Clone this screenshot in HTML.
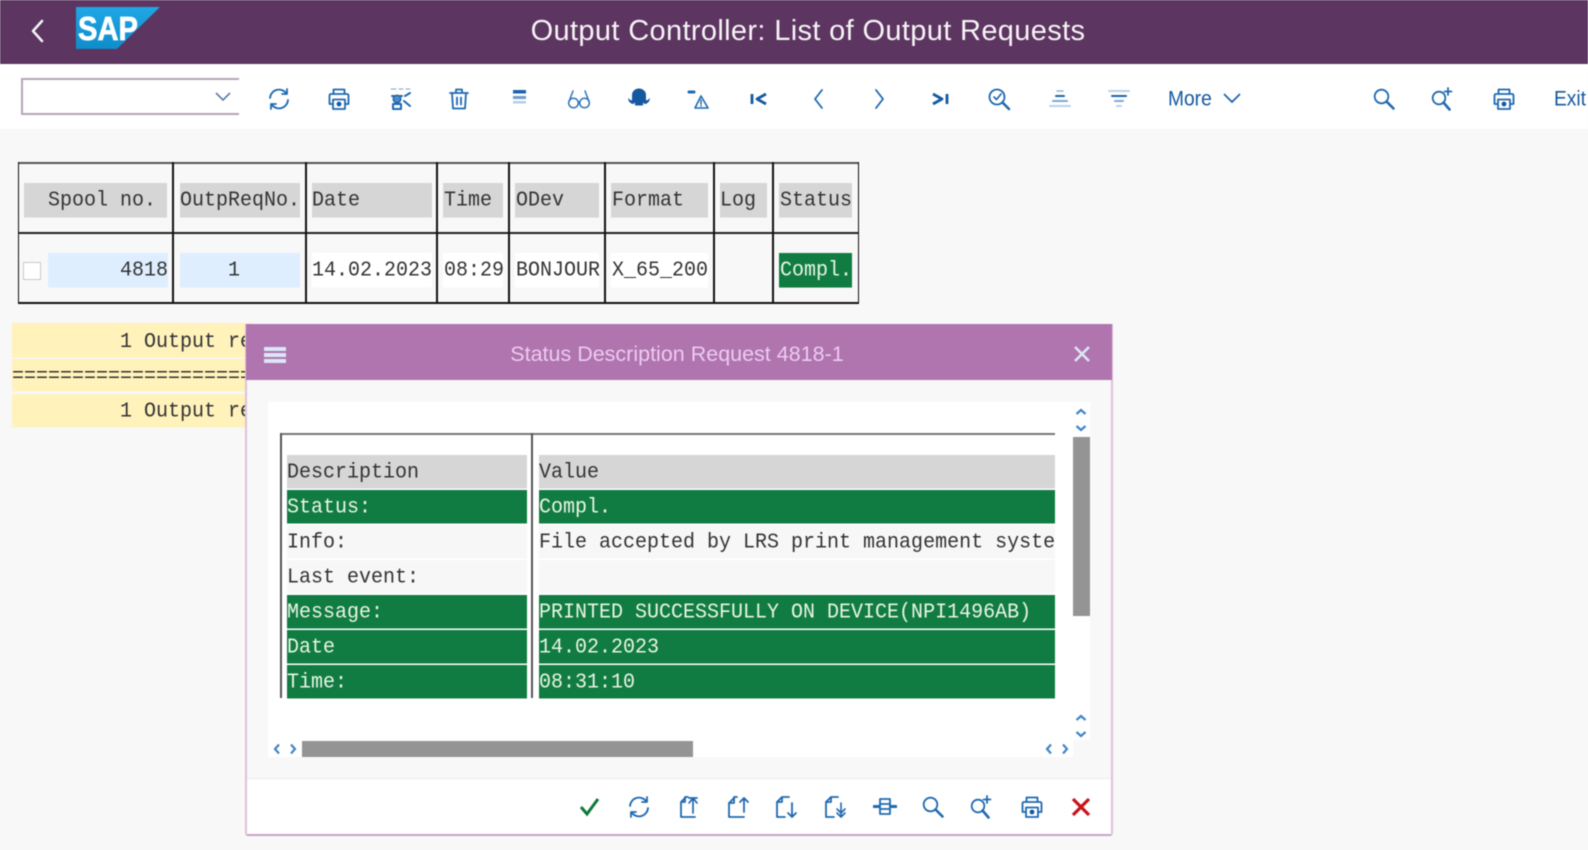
<!DOCTYPE html>
<html lang="en">
<head>
<meta charset="utf-8">
<title>Output Controller: List of Output Requests</title>
<style>
html,body{margin:0;padding:0;width:1588px;height:850px;overflow:hidden;background:#f8f8f8}
#p{position:relative;width:1588px;height:850px;overflow:hidden;background:#f8f8f8;filter:blur(.55px);font-family:"Liberation Sans",Arial,sans-serif}
#p div,#p svg{position:absolute}
.t{font:20px/34px "Liberation Mono",monospace;color:#333;white-space:pre;height:31.5px;transform:scaleY(1.08);transform-origin:0 0}
.r{height:30.6px;line-height:33px}
.n{text-indent:1px}
.g{background:#d6d6d6}.w{background:#fff}.l{background:#deeeff}.e{background:#117c41}.e.t{color:#e8f5e6}
.y{background:#fff2bb}
.v{background:#111}
.i{width:24px;height:24px;fill:none;stroke:#1f69b0;stroke-width:1.8;stroke-linecap:round;stroke-linejoin:round}
.i.f{stroke:none;fill:#14599f}
</style>
</head>
<body>
<div id="p">
<!-- header -->
<div style="left:0;top:0;width:1588px;height:64px;background:#5c3560"></div>
<svg style="left:28px;top:18px" width="20" height="26" fill="none" stroke="#f2f2f6" stroke-width="2.6" stroke-linecap="round" stroke-linejoin="round"><path d="M14 3 5 13l9 10"/></svg>
<svg style="left:76px;top:7px" width="84" height="42"><defs><linearGradient id="sg" x1="0" y1="0" x2="0" y2="1"><stop offset="0" stop-color="#1fa8e4"/><stop offset="1" stop-color="#0f8ccb"/></linearGradient></defs><polygon points="0,0 84,0 41,42 0,42" fill="url(#sg)"/><text x="2" y="33" font-family="Liberation Sans" font-weight="700" font-size="33" fill="#fff" stroke="#fff" stroke-width=".7" textLength="60" lengthAdjust="spacingAndGlyphs">SAP</text></svg>
<div style="left:0;top:13px;width:1616px;text-align:center;color:#f6f3f6;font-size:29px;letter-spacing:.35px;line-height:36px;white-space:pre">Output Controller: List of Output Requests</div>
<!-- toolbar -->
<div style="left:0;top:64px;width:1588px;height:65px;background:#fff"></div>
<div style="left:21px;top:78px;width:216px;height:33px;background:#fff;border:solid #b5a6b7;border-width:2px 0 2px 2px"></div>
<svg style="left:214px;top:91px" width="18" height="12" fill="none" stroke="#5b7fa8" stroke-width="1.6"><path d="M2 2l7 7 7-7"/></svg>

<svg width="0" height="0" style="left:0;top:0">
<defs>
<symbol id="ref" viewBox="0 0 24 24"><path d="M3 11a9 9 0 0 1 16-5M21 13a9 9 0 0 1-16 5" fill="none"/><path d="M20 2v5h-5M4 22v-5h5" fill="none"/></symbol>
<symbol id="prt" viewBox="0 0 24 24"><path d="M6.500 7V2.500h11V7M6 17H2.500V8.500A1.500 1.500 0 0 1 4 7h16a1.500 1.500 0 0 1 1.500 1.500V17H18M6 12.500h12v9.500H6z" fill="none"/><circle cx="12" cy="17" r="1.500" fill="#14599f" stroke="#14599f"/></symbol>
<symbol id="sch" viewBox="0 0 24 24"><circle cx="9.500" cy="9.500" r="6.800" fill="none"/><path d="M14.500 14.500l7 7" fill="none" stroke-width="2.600"/></symbol>
<symbol id="schp" viewBox="0 0 24 24"><circle cx="9" cy="11" r="6.300" fill="none"/><path d="M13.500 15.500l6 7" fill="none" stroke-width="2.600"/><path d="M18 1v7M14.500 4.500h7" fill="none"/></symbol>
</defs>
</svg>

<svg class="i" style="left:267px;top:87px"><use href="#ref"/></svg>
<svg class="i" style="left:327px;top:87px"><use href="#prt"/></svg>
<svg class="i" style="left:388px;top:87px" viewBox="0 0 24 24"><path d="M3 2h5M11 2h4M18 2h4" stroke-width="1" opacity=".6"/><path d="M4 9h10M17 9l5-3M16 14l6 5" stroke-width="2"/><circle cx="9" cy="12" r="3.800" fill="#4f8bc6" stroke-width="1.500"/><path d="M5 17h8v5H5z" stroke-width="2"/></svg>
<svg class="i" style="left:447px;top:87px" viewBox="0 0 24 24"><path d="M3 6h18M9 5.500V2.500h6v3M5 6l1 15.500h12L19 6M10 10.500v7M14 10.500v7"/></svg>
<svg style="left:507px;top:88px" width="24" height="20"><rect x="6" y="2" width="13" height="3.500" fill="#1a64ab"/><rect x="6" y="8" width="13" height="3" fill="#6f9cc9"/><rect x="6" y="13" width="13" height="2.500" fill="#b4cde6"/></svg>
<svg class="i" style="left:567px;top:87px;stroke-width:1.500;stroke:#2f76ba" viewBox="0 0 24 24"><circle cx="6.500" cy="16" r="4.800"/><circle cx="17.500" cy="16" r="4.800"/><path d="M11.300 15.500q.7-1.200 1.400 0M1.800 15 6 4M22.200 15 18 4"/></svg>
<svg class="i f" style="left:627px;top:86px" viewBox="0 0 24 24"><path d="M5 15V9a7 6.500 0 0 1 14 0v6z"/><path d="M1 12c2 2 3 2.500 5 2.500h12c2 0 3-.5 5-2.500-.3 4-3 6-5.500 6l-1.500-1.500H8L6.500 18C4 18 1.300 16 1 12z"/><rect x="8" y="16" width="8" height="3.500"/></svg>
<svg class="i" style="left:686px;top:87px;stroke-width:1.600" viewBox="0 0 24 24"><path d="M3 5h5" stroke-width="3"/><path d="M15 9l7 12H9z"/><path d="M15 13v4M15 18.600v.4" stroke-width="1.500"/></svg>
<svg class="i" style="left:747px;top:87px;stroke-width:2.800;stroke-linecap:butt;stroke:#14599f" viewBox="0 0 24 24"><path d="M5 7v10M19 7l-9 5 9 5"/></svg>
<svg class="i" style="left:806px;top:87px" viewBox="0 0 24 24"><path d="M16 3l-7 9 7 9"/></svg>
<svg class="i" style="left:868px;top:87px" viewBox="0 0 24 24"><path d="M8 3l7 9-7 9"/></svg>
<svg class="i" style="left:928px;top:87px;stroke-width:2.800;stroke-linecap:butt;stroke:#14599f" viewBox="0 0 24 24"><path d="M19 7v10M5 7l9 5-9 5"/></svg>
<svg class="i" style="left:987px;top:87px" viewBox="0 0 24 24"><circle cx="10" cy="10" r="7.500"/><path d="M15.500 15.500l6.500 6.500" stroke-width="2.600"/><path d="M7 10l2.500 2.500L14 7" stroke-width="1.700"/></svg>
<svg style="left:1048px;top:88px" width="24" height="22" fill="none" stroke-linecap="round"><path d="M9 3h6" stroke="#8fb3d8" stroke-width="1.500"/><path d="M8 8h8" stroke="#1a64ab" stroke-width="2"/><path d="M5 13h14" stroke="#7fa8d1" stroke-width="2"/><path d="M2 18h20" stroke="#b9d0e8" stroke-width="2"/></svg>
<svg style="left:1107px;top:88px" width="24" height="22" fill="none" stroke-linecap="round"><path d="M2 3h20" stroke="#b9d0e8" stroke-width="2"/><path d="M5 8h14" stroke="#1a64ab" stroke-width="2"/><path d="M8 13h8" stroke="#7fa8d1" stroke-width="2"/><path d="M10 18h4" stroke="#b9d0e8" stroke-width="2"/></svg>
<div style="left:1168px;top:86px;color:#14599f;font-size:20px;line-height:26px;white-space:pre;transform:scale(.96,1.08);transform-origin:0 50%">More</div>
<svg style="left:1222px;top:92px" width="20" height="14" fill="none" stroke="#1a64ab" stroke-width="1.700"><path d="M2 2l8 8 8-8"/></svg>
<svg class="i" style="left:1372px;top:87px"><use href="#sch"/></svg>
<svg class="i" style="left:1430px;top:87px"><use href="#schp"/></svg>
<svg class="i" style="left:1492px;top:87px"><use href="#prt"/></svg>
<div style="left:1554px;top:86px;color:#14599f;font-size:20px;line-height:26px;transform:scale(.96,1.08);transform-origin:0 50%">Exit</div>

<!-- main table -->
<div style="left:18px;top:162px;width:841px;height:2px;background:#555"></div>
<div style="left:18px;top:232px;width:841px;height:2px;background:#222"></div>
<div style="left:18px;top:302px;width:841px;height:2px;background:#111"></div>
<div class="v" style="left:18px;top:162px;width:1px;height:142px"></div>
<div class="v" style="left:172px;top:162px;width:2px;height:142px"></div>
<div class="v" style="left:305px;top:162px;width:2px;height:142px"></div>
<div class="v" style="left:436px;top:162px;width:2px;height:142px"></div>
<div class="v" style="left:508px;top:162px;width:2px;height:142px"></div>
<div class="v" style="left:604px;top:162px;width:2px;height:142px"></div>
<div class="v" style="left:713px;top:162px;width:2px;height:142px"></div>
<div class="v" style="left:772px;top:162px;width:2px;height:142px"></div>
<div class="v" style="left:858px;top:162px;width:1px;height:142px"></div>

<div class="g t" style="left:24px;top:183px;width:119px;padding-left:24px">Spool no.</div>
<div class="g t" style="left:180px;top:183px;width:120px">OutpReqNo.</div>
<div class="g t" style="left:312px;top:183px;width:120px">Date</div>
<div class="g t n" style="left:443px;top:183px;width:60px">Time</div>
<div class="g t n" style="left:515px;top:183px;width:84px">ODev</div>
<div class="g t n" style="left:611px;top:183px;width:97px">Format</div>
<div class="g t" style="left:720px;top:183px;width:47px">Log</div>
<div class="g t n" style="left:779px;top:183px;width:73px">Status</div>

<div style="left:23px;top:262px;width:16px;height:16px;background:#fff;border:1px solid #c8c8c8"></div>
<div class="l t" style="left:48px;top:253px;width:120px;text-align:right">4818</div>
<div class="l t" style="left:180px;top:253px;width:120px;text-indent:48px">1</div>
<div class="w t" style="left:312px;top:253px;width:120px">14.02.2023</div>
<div class="w t n" style="left:443px;top:253px;width:60px">08:29</div>
<div class="w t n" style="left:515px;top:253px;width:84px">BONJOUR</div>
<div class="w t n" style="left:611px;top:253px;width:97px">X_65_200</div>
<div class="e t n" style="left:779px;top:253px;width:73px">Compl.</div>

<!-- messages -->
<div class="y t" style="left:12px;top:323px;width:240px;text-indent:108px;line-height:35px">1 Output request</div>
<div class="y t" style="left:12px;top:359px;width:240px;height:29.6px;line-height:33px;overflow:hidden">==============================</div>
<div class="y t r" style="left:12px;top:394px;width:240px;text-indent:108px">1 Output request</div>

<!-- dialog -->
<div style="left:245px;top:324px;width:864px;height:510px;background:#f8f8f8;border:solid #dcc2dc;border-width:0 2px 2px 2px;border-bottom-color:#c9a3c9;border-radius:0 0 3px 3px"></div>
<div style="left:246px;top:324px;width:866px;height:56px;background:#b074ae"></div>
<div style="left:264px;top:347px;width:22px;height:3.500px;background:#dbe6f8"></div>
<div style="left:264px;top:353px;width:22px;height:3.500px;background:#dbe6f8"></div>
<div style="left:264px;top:359px;width:22px;height:3.500px;background:#dbe6f8"></div>
<div style="left:246px;top:339px;width:866px;text-align:center;color:#eccbf2;font-size:21.500px;line-height:30px;text-indent:-4px">Status Description Request 4818-1</div>
<svg style="left:1073px;top:345px" width="18" height="18" fill="none" stroke="#dbe6f6" stroke-width="2.600"><path d="M2 2l14 14M16 2 2 16"/></svg>

<div class="w" style="left:268px;top:402px;width:805px;height:355px"></div>
<div class="w" style="left:1073px;top:402px;width:17px;height:338px"></div>

<!-- inner table -->
<div style="left:280px;top:433px;width:775px;height:2px;background:#777"></div>
<div style="left:280px;top:433px;width:2px;height:265px;background:#555"></div>
<div style="left:531px;top:433px;width:2px;height:265px;background:#555"></div>

<div class="g t r" style="left:287px;top:455px;width:240px">Description</div>
<div class="g t r" style="left:539px;top:455px;width:516px">Value</div>
<div class="e t r" style="left:287px;top:490px;width:240px">Status:</div>
<div class="e t r" style="left:539px;top:490px;width:516px">Compl.</div>
<div class="t r" style="left:287px;top:525px;width:240px;background:#f7f7f7">Info:</div>
<div class="t r" style="left:539px;top:525px;width:516px;background:#f7f7f7;overflow:hidden">File accepted by LRS print management system</div>
<div class="t r" style="left:287px;top:560px;width:240px;background:#f7f7f7">Last event:</div>
<div class="t r" style="left:539px;top:560px;width:516px;background:#f7f7f7"></div>
<div class="e t r" style="left:287px;top:595px;width:240px">Message:</div>
<div class="e t r" style="left:539px;top:595px;width:516px">PRINTED SUCCESSFULLY ON DEVICE(NPI1496AB)</div>
<div class="e t r" style="left:287px;top:630px;width:240px">Date</div>
<div class="e t r" style="left:539px;top:630px;width:516px">14.02.2023</div>
<div class="e t r" style="left:287px;top:665px;width:240px">Time:</div>
<div class="e t r" style="left:539px;top:665px;width:516px">08:31:10</div>

<!-- scrollbars -->
<div style="left:1073px;top:437px;width:17px;height:179px;background:#949494"></div>
<div style="left:302px;top:741px;width:391px;height:16px;background:#949494"></div>
<svg style="left:1074px;top:405px" width="14" height="30" fill="none" stroke="#3f86c9" stroke-width="2.200"><path d="M2.500 9 7 5l4.500 4M2.500 21 7 25l4.500-4"/></svg>
<svg style="left:1074px;top:711px" width="14" height="30" fill="none" stroke="#3f86c9" stroke-width="2.200"><path d="M2.500 9 7 5l4.500 4M2.500 21 7 25l4.500-4"/></svg>
<svg style="left:270px;top:742px" width="30" height="14" fill="none" stroke="#3f86c9" stroke-width="2.200"><path d="M9 2.500 5 7l4 4.500M21 2.500 25 7l-4 4.500"/></svg>
<svg style="left:1042px;top:742px" width="30" height="14" fill="none" stroke="#3f86c9" stroke-width="2.200"><path d="M9 2.500 5 7l4 4.500M21 2.500 25 7l-4 4.500"/></svg>

<!-- footer -->
<div style="left:247px;top:778px;width:864px;height:56px;background:#fff;border-top:1px solid #ececec;box-sizing:border-box"></div>
<svg style="left:579px;top:797px" width="22" height="20" fill="none" stroke="#0c7a3a" stroke-width="3"><path d="M2 10l6 7L19 2"/></svg>
<svg class="i" style="left:627px;top:795px"><use href="#ref"/></svg>
<svg class="i" style="left:677px;top:795px" viewBox="0 0 24 24"><path d="M9 2 4 7v15h14M4 7h4V2h3"/><path d="M16 18V4M12 8l4-5 4 5M12 3h8" stroke-width="1.700"/></svg>
<svg class="i" style="left:726px;top:795px" viewBox="0 0 24 24"><path d="M9 2 3 8v14h15M3 8h5V2h3"/><path d="M18 17V3M14 7l4-4 4 4"/></svg>
<svg class="i" style="left:774px;top:795px" viewBox="0 0 24 24"><path d="M15 2H8L3 7v15h8M3 7h5V2"/><path d="M18 8v14M14 18l4 4 4-4"/></svg>
<svg class="i" style="left:823px;top:795px" viewBox="0 0 24 24"><path d="M15 2H8L3 7v15h8M3 7h5V2"/><path d="M18 8v13M14 14l4 4 4-4M14 18l4 4 4-4" stroke-width="1.600"/></svg>
<svg class="i" style="left:873px;top:795px" viewBox="0 0 24 24"><path d="M7 4h10v15H7zM7 9h10M7 14h10"/><path d="M1 11.500h5M18 11.500h5" stroke-width="3"/></svg>
<svg class="i" style="left:921px;top:795px"><use href="#sch"/></svg>
<svg class="i" style="left:969px;top:795px"><use href="#schp"/></svg>
<svg class="i" style="left:1020px;top:795px"><use href="#prt"/></svg>
<svg style="left:1070px;top:796px" width="22" height="22" fill="none" stroke="#c8141c" stroke-width="3.200"><path d="M3 3l16 16M19 3 3 19"/></svg>
</div>
</body>
</html>
